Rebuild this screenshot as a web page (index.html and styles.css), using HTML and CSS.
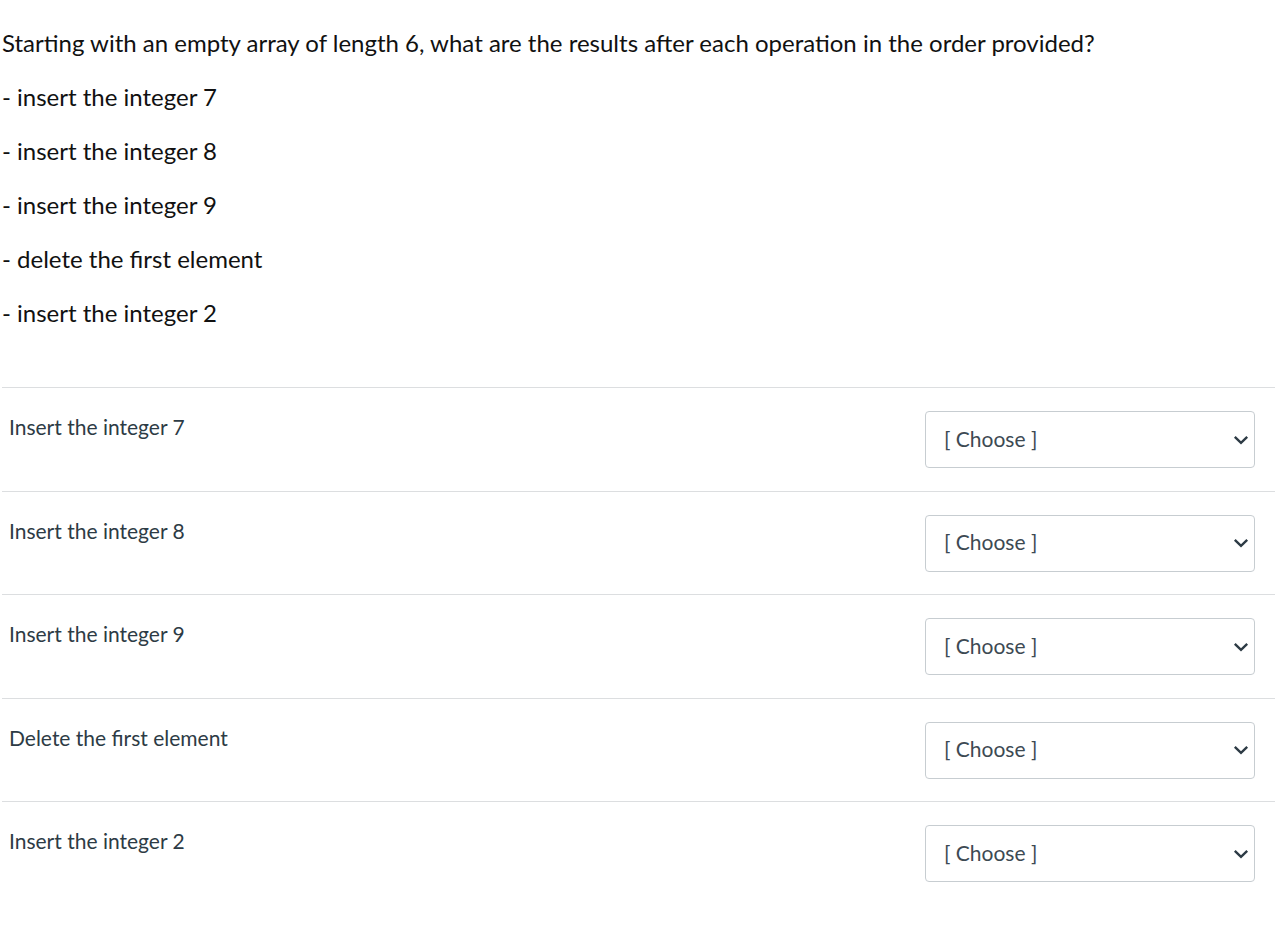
FILE: index.html
```html
<!DOCTYPE html>
<html>
<head>
<meta charset="utf-8">
<link rel="stylesheet" href="styles.css">
</head>
<body>
<div class="quiz">
  <div class="question">
    <p>Starting with an empty array of length 6, what are the results after each operation in the order provided?</p>
    <p>- insert the integer 7</p>
    <p>- insert the integer 8</p>
    <p>- insert the integer 9</p>
    <p>- delete the first element</p>
    <p>- insert the integer 2</p>
  </div>
  <div class="answers">
    <div class="row">
      <div class="label">Insert the integer 7</div>
      <div class="select"><span>[ Choose ]</span><svg class="chev" viewBox="0 0 16 10" width="16" height="10"><path d="M1.8 1.8 L8 7.8 L14.2 1.8" fill="none" stroke="#2d3b45" stroke-width="2.4"/></svg></div>
    </div>
    <div class="row">
      <div class="label">Insert the integer 8</div>
      <div class="select"><span>[ Choose ]</span><svg class="chev" viewBox="0 0 16 10" width="16" height="10"><path d="M1.8 1.8 L8 7.8 L14.2 1.8" fill="none" stroke="#2d3b45" stroke-width="2.4"/></svg></div>
    </div>
    <div class="row">
      <div class="label">Insert the integer 9</div>
      <div class="select"><span>[ Choose ]</span><svg class="chev" viewBox="0 0 16 10" width="16" height="10"><path d="M1.8 1.8 L8 7.8 L14.2 1.8" fill="none" stroke="#2d3b45" stroke-width="2.4"/></svg></div>
    </div>
    <div class="row">
      <div class="label">Delete the first element</div>
      <div class="select"><span>[ Choose ]</span><svg class="chev" viewBox="0 0 16 10" width="16" height="10"><path d="M1.8 1.8 L8 7.8 L14.2 1.8" fill="none" stroke="#2d3b45" stroke-width="2.4"/></svg></div>
    </div>
    <div class="row">
      <div class="label">Insert the integer 2</div>
      <div class="select"><span>[ Choose ]</span><svg class="chev" viewBox="0 0 16 10" width="16" height="10"><path d="M1.8 1.8 L8 7.8 L14.2 1.8" fill="none" stroke="#2d3b45" stroke-width="2.4"/></svg></div>
    </div>
  </div>
</div>
</body>
</html>
```
FILE: styles.css
```css
html, body {
  margin: 0;
  padding: 0;
  background: #fff;
}
body {
  font-family: Lato, "Open Sans", sans-serif;
  color: #111;
}
.quiz {
  padding-left: 2px;
  padding-top: 28px;
}
.question p {
  margin: 0 0 24px 0;
  font-size: 24px;
  line-height: 30px;
}
.question p:last-child {
  margin-bottom: 0;
}
.answers {
  margin-top: 59px;
}
.row {
  display: flex;
  justify-content: space-between;
  align-items: flex-start;
  border-top: 1px solid #dcdee0;
  padding: 23px 20px 22.5px 7px;
}
.label {
  font-size: 21px;
  line-height: 24px;
  color: #2d3b45;
  padding-top: 4px;
}
.select {
  box-sizing: border-box;
  width: 330px;
  height: 57px;
  border: 1px solid #c7cdd1;
  border-radius: 4px;
  display: flex;
  align-items: center;
  justify-content: space-between;
  padding: 0 5px 3px 18px;
  font-size: 21px;
  color: #3d4a53;
}
.chev {
  display: block;
  margin-top: 3px;
}
```
